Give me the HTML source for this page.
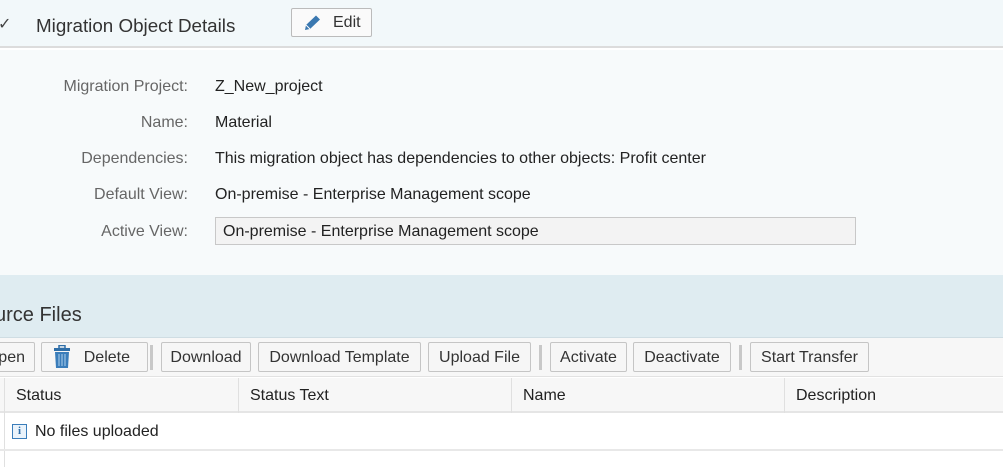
<!DOCTYPE html>
<html><head><style>
*{margin:0;padding:0;box-sizing:border-box}
body{width:1003px;height:467px;overflow:hidden;background:#fff;font-family:"Liberation Sans",Arial,sans-serif;color:#333;position:relative}
.abs{position:absolute}
.hdr{left:0;top:0;width:1003px;height:48px;background:#f2f8fa;border-bottom:2px solid #dcdcdc}
.body{left:0;top:50px;width:1003px;height:225px;background:#f7fafb}
.lbl{width:188px;text-align:right;font-size:16px;color:#666;left:0}
.val{left:215px;font-size:16px;color:#222}
.sec{left:0;top:275px;width:1003px;height:63px;background:#dfecf1;border-bottom:1px solid #cfdde3}
.tb{left:0;top:338px;width:1003px;height:39px;background:#f7f7f7;border-bottom:1px solid #e2e2e2}
.btn{top:342px;height:30px;border:1px solid #c5c5c5;border-radius:2px;background:#f6f6f6;font-size:16px;color:#333;line-height:29px;text-align:center;white-space:nowrap}
.sep{top:345px;width:3px;height:25px;background:#c8c8c8}
.th{left:0;top:378px;width:1003px;height:35px;background:#f7f7f7;border-bottom:2px solid #e5e5e5}
.col{top:378px;width:1px;height:35px;background:#e0e0e0}
.hd{top:387px;font-size:16px;color:#222}
</style></head><body>
<div class="abs hdr"></div>
<div class="abs" style="left:-2px;top:14px;font-size:16px;color:#444">✓</div>
<div class="abs" style="left:36px;top:15px;font-size:18.8px;color:#333">Migration Object Details</div>
<div class="abs" style="left:291px;top:8px;width:81px;height:29px;border:1px solid #bbb;border-radius:2px;background:#fafafa"></div>
<svg class="abs" style="left:302px;top:14px" width="20" height="18" viewBox="0 0 20 18"><path d="M3 16 L4 11 L14 1.5 L18 5.5 L8 15 Z" fill="#3a78b0"/><path d="M4 11 L8 15" stroke="#fff" stroke-width="1"/></svg>
<div class="abs" style="left:333px;top:14px;font-size:16px;color:#333">Edit</div>
<div class="abs body"></div>
<div class="abs lbl" style="top:78px">Migration Project:</div><div class="abs val" style="top:78px">Z_New_project</div>
<div class="abs lbl" style="top:114px">Name:</div><div class="abs val" style="top:114px">Material</div>
<div class="abs lbl" style="top:150px">Dependencies:</div><div class="abs val" style="top:150px">This migration object has dependencies to other objects: Profit center</div>
<div class="abs lbl" style="top:186px">Default View:</div><div class="abs val" style="top:186px">On-premise - Enterprise Management scope</div>
<div class="abs lbl" style="top:223px">Active View:</div>
<div class="abs" style="left:215px;top:217px;width:641px;height:28px;border:1px solid #c8c8c8;background:#f3f3f3"></div>
<div class="abs val" style="left:223px;top:223px">On-premise - Enterprise Management scope</div>
<div class="abs sec"></div>
<div class="abs" style="left:-5px;top:304px;font-size:20px;color:#333">urce Files</div>
<div class="abs tb"></div>
<div class="abs btn" style="left:-10px;width:45px;text-align:right;padding-right:9px">pen</div>
<div class="abs btn" style="left:41px;width:107px;text-align:right;padding-right:17px">Delete</div>
<svg class="abs" style="left:52px;top:345px" width="20" height="24" viewBox="0 0 20 24"><rect x="2" y="3" width="16" height="3" fill="#2e6ea8"/><rect x="7" y="0.5" width="6" height="3" fill="none" stroke="#2e6ea8" stroke-width="1.5"/><path d="M3 7 H17 L16 23 H4 Z" fill="#3a7dba"/><path d="M7 9 V21 M10 9 V21 M13 9 V21" stroke="#9cc3e4" stroke-width="1.2"/></svg>
<div class="abs sep" style="left:150px"></div>
<div class="abs btn" style="left:161px;width:90px">Download</div>
<div class="abs btn" style="left:258px;width:163px">Download Template</div>
<div class="abs btn" style="left:428px;width:103px">Upload File</div>
<div class="abs sep" style="left:539px"></div>
<div class="abs btn" style="left:550px;width:77px">Activate</div>
<div class="abs btn" style="left:633px;width:98px">Deactivate</div>
<div class="abs sep" style="left:739px"></div>
<div class="abs btn" style="left:750px;width:119px">Start Transfer</div>
<div class="abs th"></div>
<div class="abs" style="left:4px;top:378px;width:1px;height:89px;background:#e0e0e0"></div>
<div class="abs col" style="left:238px"></div>
<div class="abs col" style="left:511px"></div>
<div class="abs col" style="left:784px"></div>
<div class="abs hd" style="left:16px">Status</div>
<div class="abs hd" style="left:250px">Status Text</div>
<div class="abs hd" style="left:523px">Name</div>
<div class="abs hd" style="left:796px">Description</div>
<div class="abs" style="left:12px;top:424px;width:15px;height:15px;border:1px solid #3a7dba;background:#eaf3fb;font:bold 11px 'Liberation Serif',serif;color:#2e6ea8;text-align:center;line-height:13px">i</div>
<div class="abs" style="left:35px;top:423px;font-size:16px;color:#222">No files uploaded</div>
<div class="abs" style="left:0;top:449px;width:1003px;height:2px;background:#e8e8e8"></div>
</body></html>
